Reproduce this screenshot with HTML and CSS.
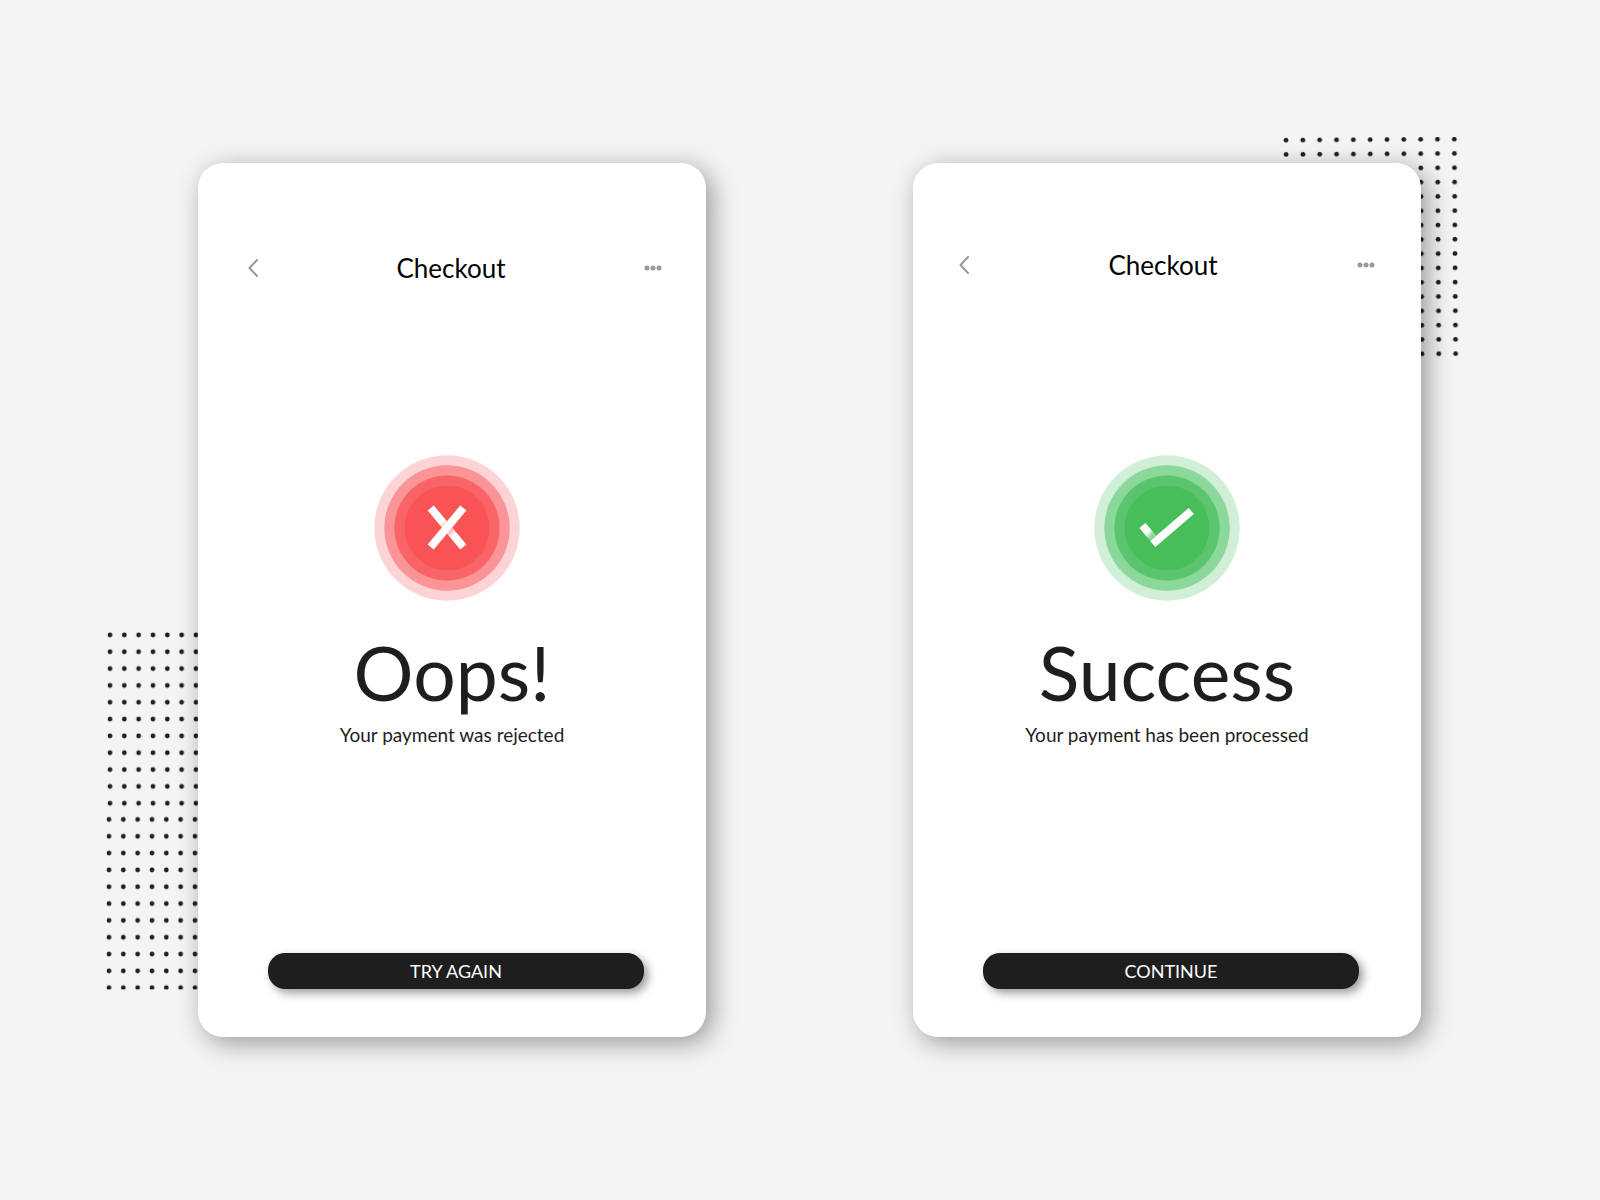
FILE: index.html
```html
<!DOCTYPE html>
<html lang="en">

<head>
  <meta charset="UTF-8">
  <meta name="viewport" content="width=device-width, initial-scale=1.0">
  <title>Checkout</title>
  <link rel="stylesheet" href="styles.css">
</head>

<body>
  <main class="screens">
    <section class="screen">
      <svg class="dots dots-left" width="110" height="360" viewBox="0 0 110 360" aria-hidden="true">
        <defs>
          <pattern id="dot-tall" width="14.33" height="16.83" patternUnits="userSpaceOnUse">
            <circle cx="4" cy="4" r="2.4" fill="#1e1e1e" />
          </pattern>
        </defs>
        <rect width="110" height="180" fill="url(#dot-tall)" />
        <g transform="translate(-1 184.5)">
          <rect width="110" height="174" fill="url(#dot-tall)" />
        </g>
      </svg>
      <article class="card card-rejected">
        <header class="card-header">
          <button class="icon-button" type="button" aria-label="Back">
            <svg width="10" height="18" viewBox="0 0 10 18">
              <path d="M9 1L1.5 9L9 17" fill="none" stroke="#999" stroke-width="2" stroke-linecap="round" stroke-linejoin="round" />
            </svg>
          </button>
          <h1>Checkout</h1>
          <button class="icon-button" type="button" aria-label="More">
            <svg width="18" height="18" viewBox="0 0 18 18" fill="#999">
              <circle cx="3" cy="9" r="2.5" />
              <circle cx="9" cy="9" r="2.5" />
              <circle cx="15" cy="9" r="2.5" />
            </svg>
          </button>
        </header>
        <svg class="status-icon" width="156" height="146" viewBox="0 0 156 146" aria-hidden="true">
          <defs>
            <linearGradient id="cross-shade" gradientUnits="userSpaceOnUse" x1="57" y1="54" x2="89" y2="93">
              <stop offset=".34" stop-color="#fff" />
              <stop offset=".44" stop-color="#fbb0b0" />
              <stop offset=".56" stop-color="#fbb0b0" />
              <stop offset=".7" stop-color="#fff" />
            </linearGradient>
          </defs>
          <circle cx="73" cy="73" r="72.7" fill="#fcd4d5" />
          <circle cx="73" cy="73" r="62.7" fill="#fb9496" />
          <circle cx="73" cy="73" r="52.6" fill="#f96466" />
          <circle cx="73" cy="73" r="42.5" fill="#f85455" />
          <path d="M56.7 53L89.3 92" stroke="url(#cross-shade)" stroke-width="8" />
          <path d="M89.3 53L56.7 92" stroke="#fff" stroke-width="8" />
        </svg>
        <h2>Oops!</h2>
        <p>Your payment was rejected</p>
        <button class="action" type="button">TRY AGAIN</button>
      </article>
    </section>

    <section class="screen">
      <svg class="dots dots-right" width="176" height="222" viewBox="0 0 176 222" aria-hidden="true">
        <defs>
          <pattern id="dot-wide" width="16.83" height="14.3" patternUnits="userSpaceOnUse">
            <circle cx="3" cy="3" r="2.4" fill="#1e1e1e" />
          </pattern>
        </defs>
        <rect width="175" height="221" fill="url(#dot-wide)" transform="rotate(-.35)" />
      </svg>
      <article class="card card-success">
        <header class="card-header">
          <button class="icon-button" type="button" aria-label="Back">
            <svg width="10" height="18" viewBox="0 0 10 18">
              <path d="M9 1L1.5 9L9 17" fill="none" stroke="#999" stroke-width="2" stroke-linecap="round" stroke-linejoin="round" />
            </svg>
          </button>
          <h1>Checkout</h1>
          <button class="icon-button" type="button" aria-label="More">
            <svg width="18" height="18" viewBox="0 0 18 18" fill="#999">
              <circle cx="3" cy="9" r="2.5" />
              <circle cx="9" cy="9" r="2.5" />
              <circle cx="15" cy="9" r="2.5" />
            </svg>
          </button>
        </header>
        <svg class="status-icon" width="146" height="146" viewBox="0 0 146 146" aria-hidden="true">
          <defs>
            <linearGradient id="check-shade" gradientUnits="userSpaceOnUse" x1="46" y1="71.5" x2="58" y2="82">
              <stop offset=".6" stop-color="#fff" />
              <stop offset=".9" stop-color="#8fd79b" />
            </linearGradient>
          </defs>
          <circle cx="73" cy="73" r="72.7" fill="#d1eed7" />
          <circle cx="73" cy="73" r="62.7" fill="#8cd89a" />
          <circle cx="73" cy="73" r="52.6" fill="#5ac56d" />
          <circle cx="73" cy="73" r="42.5" fill="#48be5b" />
          <path d="M48.5 70.5L59 83" stroke="url(#check-shade)" stroke-width="8" />
          <path d="M97.3 56L58.7 89" stroke="#fff" stroke-width="8" />
        </svg>
        <h2>Success</h2>
        <p>Your payment has been processed</p>
        <button class="action" type="button">CONTINUE</button>
      </article>
    </section>
  </main>
</body>

</html>
```
FILE: styles.css
```css
* {
  box-sizing: border-box;
}

body {
  margin: 0;
  min-height: 100vh;
  display: flex;
  align-items: center;
  background-color: #f4f4f4;
  font-family: Lato, "Open Sans", sans-serif;
  color: #1e1e1e;
}

.screens {
  flex: 1;
  display: flex;
  gap: 207px;
  padding: 40px 179px 40px 198px;
}

.screen {
  position: relative;
  flex: 1;
}

.card {
  position: relative;
  display: flex;
  flex-direction: column;
  align-items: center;
  padding: 86px 0 48px;
  border-radius: 25px;
  background-color: #fff;
  box-shadow: 6px 6px 26px rgba(0, 0, 0, .38);
}

.card-header {
  display: flex;
  justify-content: space-between;
  align-items: center;
  width: 100%;
  margin-bottom: 171px;
}

.card-rejected .card-header {
  padding: 3px 44px 0 50px;
}

.card-success .card-header {
  padding: 0 46px 3px;
}

.card-header h1 {
  margin: 0;
  font-size: 26px;
  font-weight: 400;
  line-height: 32px;
  color: #000;
}

.icon-button {
  display: flex;
  padding: 0;
  border: none;
  background: none;
  cursor: pointer;
}

.card h2 {
  margin: 31px 0 11px;
  font-size: 75px;
  font-weight: 400;
  line-height: 80px;
}

.card p {
  margin: 0 0 206px;
  font-size: 19px;
  line-height: 24px;
}

.action {
  align-self: stretch;
  height: 36px;
  margin: 0 62px 0 70px;
  border: none;
  border-radius: 17px;
  background-color: #1e1e1e;
  box-shadow: 4px 4px 10px rgba(0, 0, 0, .4);
  font-family: inherit;
  font-size: 18px;
  color: #fff;
  cursor: pointer;
}

/* dotted patches behind the cards */
.dots {
  position: absolute;
}

.dots-left {
  left: -92px;
  bottom: 46px;
}

.dots-right {
  top: -26px;
  right: -38px;
}

@media (max-width: 1100px) {
  .screens {
    flex-direction: column;
    gap: 80px;
    padding: 60px 100px;
  }
}
```
